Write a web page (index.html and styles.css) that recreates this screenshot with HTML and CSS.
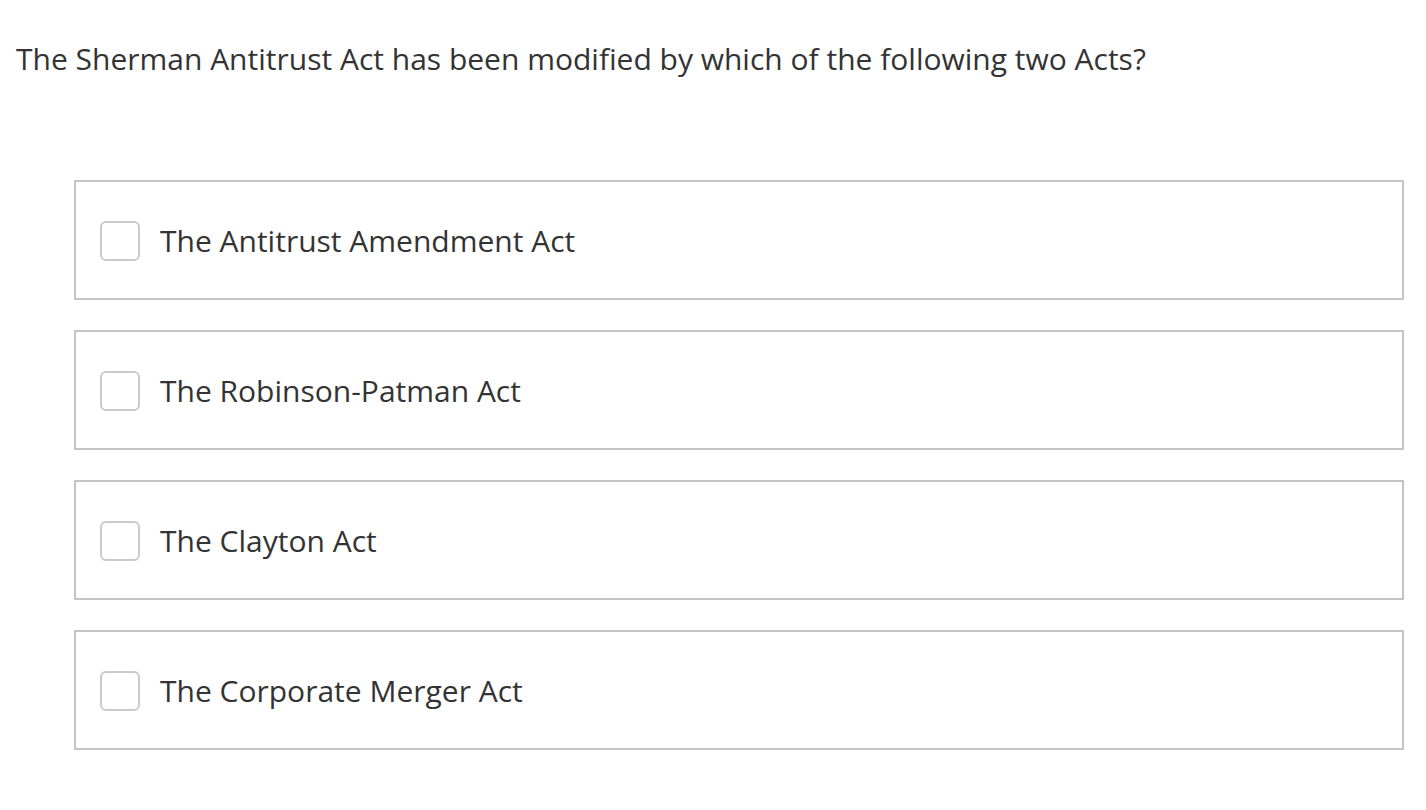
FILE: index.html
```html
<!DOCTYPE html>
<html lang="en">
<head>
  <meta charset="UTF-8">
  <title>Question</title>
  <link rel="stylesheet" href="styles.css">
</head>
<body>
  <div class="question">
    <p class="prompt">The Sherman Antitrust Act has been modified by which of the following two Acts?</p>
    <div class="choices">
      <label class="choice">
        <input type="checkbox">
        <span class="box"></span>
        <span class="text">The Antitrust Amendment Act</span>
      </label>
      <label class="choice">
        <input type="checkbox">
        <span class="box"></span>
        <span class="text">The Robinson-Patman Act</span>
      </label>
      <label class="choice">
        <input type="checkbox">
        <span class="box"></span>
        <span class="text">The Clayton Act</span>
      </label>
      <label class="choice">
        <input type="checkbox">
        <span class="box"></span>
        <span class="text">The Corporate Merger Act</span>
      </label>
    </div>
  </div>
</body>
</html>
```

FILE: styles.css
```css
body {
  margin: 0;
  font-family: "Open Sans", Arial, sans-serif;
  color: #333;
  background: #fff;
}

.question {
  padding: 39px 22px 0 16px;
}

.prompt {
  margin: 0;
  font-size: 30px;
  line-height: 40px;
}

.choices {
  margin: 101px 0 0 58px;
  display: flex;
  flex-direction: column;
  gap: 30px;
}

.choice {
  display: flex;
  align-items: center;
  gap: 20px;
  height: 114px;
  padding: 2px 24px 0;
  border: 2px solid #c4c4c4;
  cursor: pointer;
}

.choice input {
  display: none;
}

.box {
  box-sizing: border-box;
  width: 40px;
  height: 40px;
  border: 2px solid #cacaca;
  border-radius: 6px;
  background: #fff;
  flex-shrink: 0;
}

.choice input:checked + .box {
  background: #3a78c9;
  border-color: #3a78c9;
}

.text {
  font-size: 30px;
  line-height: 40px;
}
```
